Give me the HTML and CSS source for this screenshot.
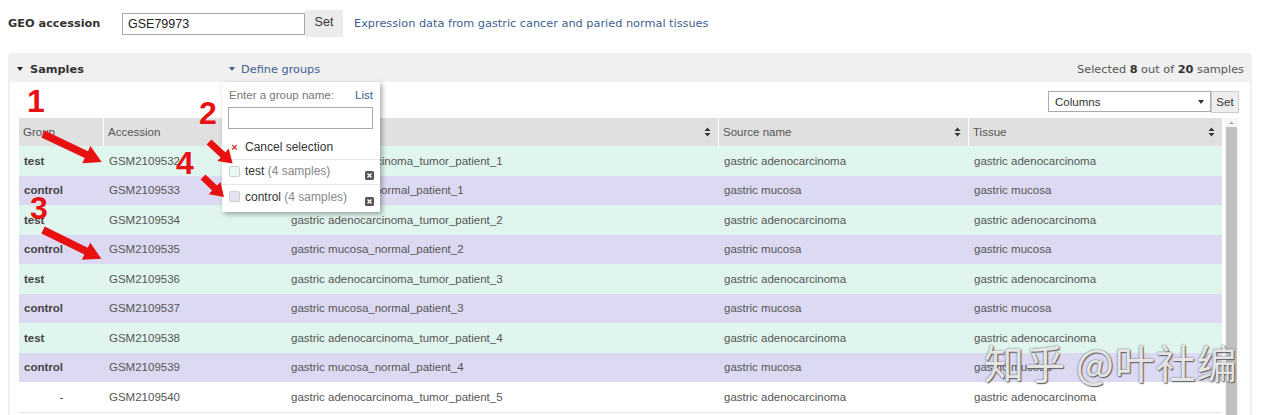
FILE: index.html
```html
<!DOCTYPE html>
<html>
<head>
<meta charset="utf-8">
<link rel="stylesheet" href="styles.css">
</head>
<body>
<div class="page">
  <div class="topbar">
    <span class="geo-label">GEO accession</span>
    <input class="geo-input" type="text" value="GSE79973">
    <button class="set-btn">Set</button>
    <a class="geo-title">Expression data from gastric cancer and paried normal tissues</a>
  </div>

  <div class="panel">
    <div class="panel-head">
      <div class="ph-left"><span class="caret"></span>Samples</div>
      <div class="define"><span class="caret blue"></span>Define groups</div>
      <div class="selected">Selected <b>8</b> out of <b>20</b> samples</div>
    </div>
    <div class="panel-body">
      <div class="toolbar">
        <div class="col-select"><span>Columns</span><span class="sel-caret"></span></div>
        <button class="small-btn">Set</button>
      </div>
      <div class="table-area">
        <table class="samples">
          <colgroup>
            <col class="c-group"><col class="c-acc"><col class="c-title"><col class="c-src"><col class="c-tis">
          </colgroup>
          <thead>
            <tr>
              <th>Group</th>
              <th>Accession<span class="sort"><svg width="7" height="10" viewBox="0 0 7 10"><path d="M3.5 0.5 L6.5 4 L0.5 4 Z M3.5 9.5 L6.5 6 L0.5 6 Z" fill="#333"/></svg></span></th>
              <th>Title<span class="sort"><svg width="7" height="10" viewBox="0 0 7 10"><path d="M3.5 0.5 L6.5 4 L0.5 4 Z M3.5 9.5 L6.5 6 L0.5 6 Z" fill="#333"/></svg></span></th>
              <th>Source name<span class="sort"><svg width="7" height="10" viewBox="0 0 7 10"><path d="M3.5 0.5 L6.5 4 L0.5 4 Z M3.5 9.5 L6.5 6 L0.5 6 Z" fill="#333"/></svg></span></th>
              <th>Tissue<span class="sort"><svg width="7" height="10" viewBox="0 0 7 10"><path d="M3.5 0.5 L6.5 4 L0.5 4 Z M3.5 9.5 L6.5 6 L0.5 6 Z" fill="#333"/></svg></span></th>
            </tr>
          </thead>
          <tbody>
            <tr class="test"><td class="grp">test</td><td>GSM2109532</td><td>gastric adenocarcinoma_tumor_patient_1</td><td>gastric adenocarcinoma</td><td>gastric adenocarcinoma</td></tr>
            <tr class="control"><td class="grp">control</td><td>GSM2109533</td><td>gastric mucosa_normal_patient_1</td><td>gastric mucosa</td><td>gastric mucosa</td></tr>
            <tr class="test"><td class="grp">test</td><td>GSM2109534</td><td>gastric adenocarcinoma_tumor_patient_2</td><td>gastric adenocarcinoma</td><td>gastric adenocarcinoma</td></tr>
            <tr class="control"><td class="grp">control</td><td>GSM2109535</td><td>gastric mucosa_normal_patient_2</td><td>gastric mucosa</td><td>gastric mucosa</td></tr>
            <tr class="test"><td class="grp">test</td><td>GSM2109536</td><td>gastric adenocarcinoma_tumor_patient_3</td><td>gastric adenocarcinoma</td><td>gastric adenocarcinoma</td></tr>
            <tr class="control"><td class="grp">control</td><td>GSM2109537</td><td>gastric mucosa_normal_patient_3</td><td>gastric mucosa</td><td>gastric mucosa</td></tr>
            <tr class="test"><td class="grp">test</td><td>GSM2109538</td><td>gastric adenocarcinoma_tumor_patient_4</td><td>gastric adenocarcinoma</td><td>gastric adenocarcinoma</td></tr>
            <tr class="control"><td class="grp">control</td><td>GSM2109539</td><td>gastric mucosa_normal_patient_4</td><td>gastric mucosa</td><td>gastric mucosa</td></tr>
            <tr class="none"><td class="grp dash">-</td><td>GSM2109540</td><td>gastric adenocarcinoma_tumor_patient_5</td><td>gastric adenocarcinoma</td><td>gastric adenocarcinoma</td></tr>
          </tbody>
        </table>
        <div class="scrollbar">
          <div class="sb-arrow"><svg width="13" height="9" viewBox="0 0 13 9"><path d="M4 6 L6.5 3.5 L9 6 Z" fill="#a8a8a8"/></svg></div>
          <div class="sb-thumb"></div>
        </div>
      </div>
    </div>

    <div class="popup">
      <div class="pop-head"><span class="pop-label">Enter a group name:</span><a class="pop-list">List</a></div>
      <input class="pop-input" type="text">
      <div class="pop-item cancel"><span class="slot x">×</span><span>Cancel selection</span></div>
      <div class="pop-item"><span class="slot"><span class="chk chk-test"></span></span><span class="gname">test</span><span class="gcount">&nbsp;(4 samples)</span>
        <span class="del"><svg width="9" height="9" viewBox="0 0 9 9"><rect x="0" y="0" width="9" height="9" rx="1.5" fill="#555"/><path d="M2.5 2.5 L6.5 6.5 M6.5 2.5 L2.5 6.5" stroke="#fff" stroke-width="1.4"/></svg></span></div>
      <div class="pop-item last"><span class="slot"><span class="chk chk-control"></span></span><span class="gname">control</span><span class="gcount">&nbsp;(4 samples)</span>
        <span class="del"><svg width="9" height="9" viewBox="0 0 9 9"><rect x="0" y="0" width="9" height="9" rx="1.5" fill="#555"/><path d="M2.5 2.5 L6.5 6.5 M6.5 2.5 L2.5 6.5" stroke="#fff" stroke-width="1.4"/></svg></span></div>
    </div>
  </div>

  <div class="num n1">1</div>
  <div class="num n2">2</div>
  <div class="num n3">3</div>
  <div class="num n4">4</div>
  <svg class="arrows" width="1268" height="415" viewBox="0 0 1268 415">
    <g fill="#e81010">
      <g transform="translate(43,134) rotate(25.4)"><polygon points="0,-3.8 48,-3.8 48,-9.5 65,0 48,9.5 48,3.8 0,3.8"/></g>
      <g transform="translate(43,230) rotate(26.2)"><polygon points="0,-3.8 48,-3.8 48,-9.5 65,0 48,9.5 48,3.8 0,3.8"/></g>
      <g transform="translate(209,142) rotate(42.5)"><polygon points="0,-3.5 19,-3.5 19,-8.5 32,0 19,8.5 19,3.5 0,3.5"/></g>
      <g transform="translate(203,177) rotate(43.6)"><polygon points="0,-3.5 16,-3.5 16,-8.5 29,0 16,8.5 16,3.5 0,3.5"/></g>
    </g>
  </svg>
  <div class="watermark">知乎 @叶社编</div>
</div>
</body>
</html>
```
FILE: styles.css
```css
html, body {
  margin: 0;
  padding: 0;
  overflow: hidden;
  background: #fff;
}
.page {
  position: relative;
  width: 1268px;
  height: 415px;
  overflow: hidden;
  font-family: "DejaVu Sans", Verdana, sans-serif;
  font-size: 11.3px;
  color: #333;
}

/* top bar */
.topbar {
  display: flex;
  align-items: center;
  height: 27px;
  padding: 10px 0 0 8px;
}
.geo-label {
  font-weight: bold;
  color: #333;
  width: 114px;
}
.geo-input {
  box-sizing: border-box;
  width: 183px;
  height: 22px;
  margin: 0;
  border: 1px solid #a9a9a9;
  padding: 0 5px;
  font-family: "Liberation Sans", Arial, sans-serif;
  font-size: 12.5px;
  color: #222;
}
.set-btn {
  box-sizing: border-box;
  width: 38px;
  height: 27px;
  margin: 0;
  border: none;
  background: #ececec;
  font-family: "Liberation Sans", Arial, sans-serif;
  font-size: 12.5px;
  color: #333;
  padding: 0 0 4px 0;
}
.geo-title {
  margin-left: 11px;
  color: #3d5f8f;
}

/* panel */
.panel {
  position: relative;
  margin: 16px 0 0 8px;
  width: 1244px;
  box-sizing: border-box;
  background: #f0f0f0;
  border-radius: 4px;
  padding: 0 2px;
}
.panel-head {
  display: flex;
  align-items: center;
  height: 29px;
  padding: 3px 6px 0 7px;
  box-sizing: border-box;
}
.caret {
  display: inline-block;
  width: 0;
  height: 0;
  border-left: 3px solid transparent;
  border-right: 3px solid transparent;
  border-top: 4px solid #222;
  margin-right: 7px;
  vertical-align: 2px;
}
.caret.blue {
  border-top-color: #3d5f8f;
  margin-right: 6px;
}
.ph-left {
  width: 212px;
  font-weight: bold;
  color: #333;
}
.define {
  color: #3d5f8f;
}
.selected {
  margin-left: auto;
  color: #555;
}
.selected b {
  color: #333;
}
.panel-body {
  background: #fff;
  padding: 9px 11px 0 9px;
  height: 400px;
}
.toolbar {
  display: flex;
  justify-content: flex-end;
  height: 22px;
  margin-bottom: 5px;
}
.col-select {
  box-sizing: border-box;
  width: 163px;
  height: 21px;
  border: 1px solid #aaa;
  display: flex;
  align-items: center;
  padding: 0 6px;
  font-family: "Liberation Sans", Arial, sans-serif;
  font-size: 11.5px;
  color: #333;
}
.sel-caret {
  margin-left: auto;
  width: 0;
  height: 0;
  border-left: 3px solid transparent;
  border-right: 3px solid transparent;
  border-top: 4px solid #333;
}
.small-btn {
  box-sizing: border-box;
  width: 28px;
  height: 22px;
  margin: 0;
  border: 1px solid #ccc;
  background: #eee;
  font-family: "Liberation Sans", Arial, sans-serif;
  font-size: 11.5px;
  color: #333;
  padding: 0;
}

/* table */
.table-area {
  display: flex;
  gap: 3px;
  height: 310px;
}
.samples {
  width: 1203px;
  table-layout: fixed;
  border-collapse: separate;
  border-spacing: 0;
  align-self: flex-start;
  font-family: "Liberation Sans", Arial, sans-serif;
  font-size: 11.5px;
  color: #555;
}
.c-group { width: 85px; }
.c-acc { width: 182px; }
.c-title { width: 433px; }
.c-src { width: 250px; }
.c-tis { width: 253px; }
.samples th {
  height: 28px;
  background: #e0e0e0;
  text-align: left;
  font-weight: normal;
  padding: 0 0 0 4px;
  border-right: 1px solid #fff;
  position: relative;
  color: #555;
}
.samples th:last-child {
  border-right: none;
}
.sort {
  position: absolute;
  right: 7px;
  top: 9px;
  line-height: 0;
}
.samples td {
  height: 29.5px;
  padding: 0 0 0 5px;
  white-space: nowrap;
  overflow: hidden;
}
.samples td.grp {
  font-weight: bold;
  color: #444;
}
.samples td.dash {
  text-align: center;
  font-weight: normal;
  padding: 0;
}
tr.test td { background: #dff5ed; }
tr.control td { background: #dcdaf2; }
tr.none td { background: #fff; border-bottom: 1px solid #e2e2e2; }

.scrollbar {
  width: 13px;
  background: #f6f6f6;
  display: flex;
  flex-direction: column;
}
.sb-arrow {
  height: 9px;
  line-height: 0;
}
.sb-thumb {
  flex: 1;
  margin: 0 1px;
  background: #c1c1c1;
}

/* popup */
.popup {
  position: absolute;
  left: 214px;
  top: 29px;
  width: 158px;
  height: 130px;
  box-sizing: border-box;
  background: #fff;
  padding-top: 6px;
  box-shadow: 2px 2px 5px rgba(0, 0, 0, 0.35);
  font-family: "Liberation Sans", Arial, sans-serif;
  font-size: 11.5px;
}
.pop-head {
  display: flex;
  justify-content: space-between;
  line-height: 14px;
  padding: 0 7px;
}
.pop-label { color: #777; }
.pop-list { color: #3d5f8f; }
.pop-input {
  display: block;
  box-sizing: border-box;
  width: 145px;
  height: 22px;
  margin: 5px 0 6px 6px;
  border: 1px solid #aaa;
  padding: 0;
}
.pop-item {
  display: flex;
  align-items: center;
  height: 25px;
  padding: 0 0 2px 7px;
  box-sizing: border-box;
  border-bottom: 1px solid #e6e6e6;
  color: #333;
  font-size: 12px;
}
.pop-item.cancel {
  height: 25px;
  padding-bottom: 0;
}
.pop-item.last {
  border-bottom: none;
}
.slot {
  width: 11px;
  margin-right: 5px;
  display: flex;
  justify-content: center;
  align-items: center;
}
.slot.x {
  color: #c0392b;
  font-weight: bold;
  font-size: 11px;
}
.chk {
  display: block;
  box-sizing: border-box;
  width: 11px;
  height: 11px;
  border: 1px solid #d0d0d0;
  border-radius: 2px;
}
.chk-test { background: #eaf6f1; }
.chk-control { background: #e4e2f3; }
.gcount { color: #888; }
.del {
  margin-left: auto;
  margin-right: 6px;
  align-self: flex-end;
  margin-bottom: 2px;
  line-height: 0;
}

/* annotations */
.num {
  position: absolute;
  font-family: "Liberation Sans", Arial, sans-serif;
  font-weight: bold;
  font-size: 32px;
  line-height: 32px;
  color: #e81010;
}
.n1 { left: 27px; top: 85px; }
.n2 { left: 199px; top: 97px; }
.n3 { left: 30px; top: 192px; }
.n4 { left: 176px; top: 147px; }
.arrows {
  position: absolute;
  left: 0;
  top: 0;
  pointer-events: none;
}
.watermark {
  position: absolute;
  left: 984px;
  top: 334px;
  font-family: "Noto Sans CJK SC", sans-serif;
  font-size: 40px;
  line-height: 56px;
  letter-spacing: 1px;
  color: rgba(255, 255, 255, 0.85);
  text-shadow: 0 0 2px #555, 1px 1px 1px #666;
  white-space: nowrap;
}
```
